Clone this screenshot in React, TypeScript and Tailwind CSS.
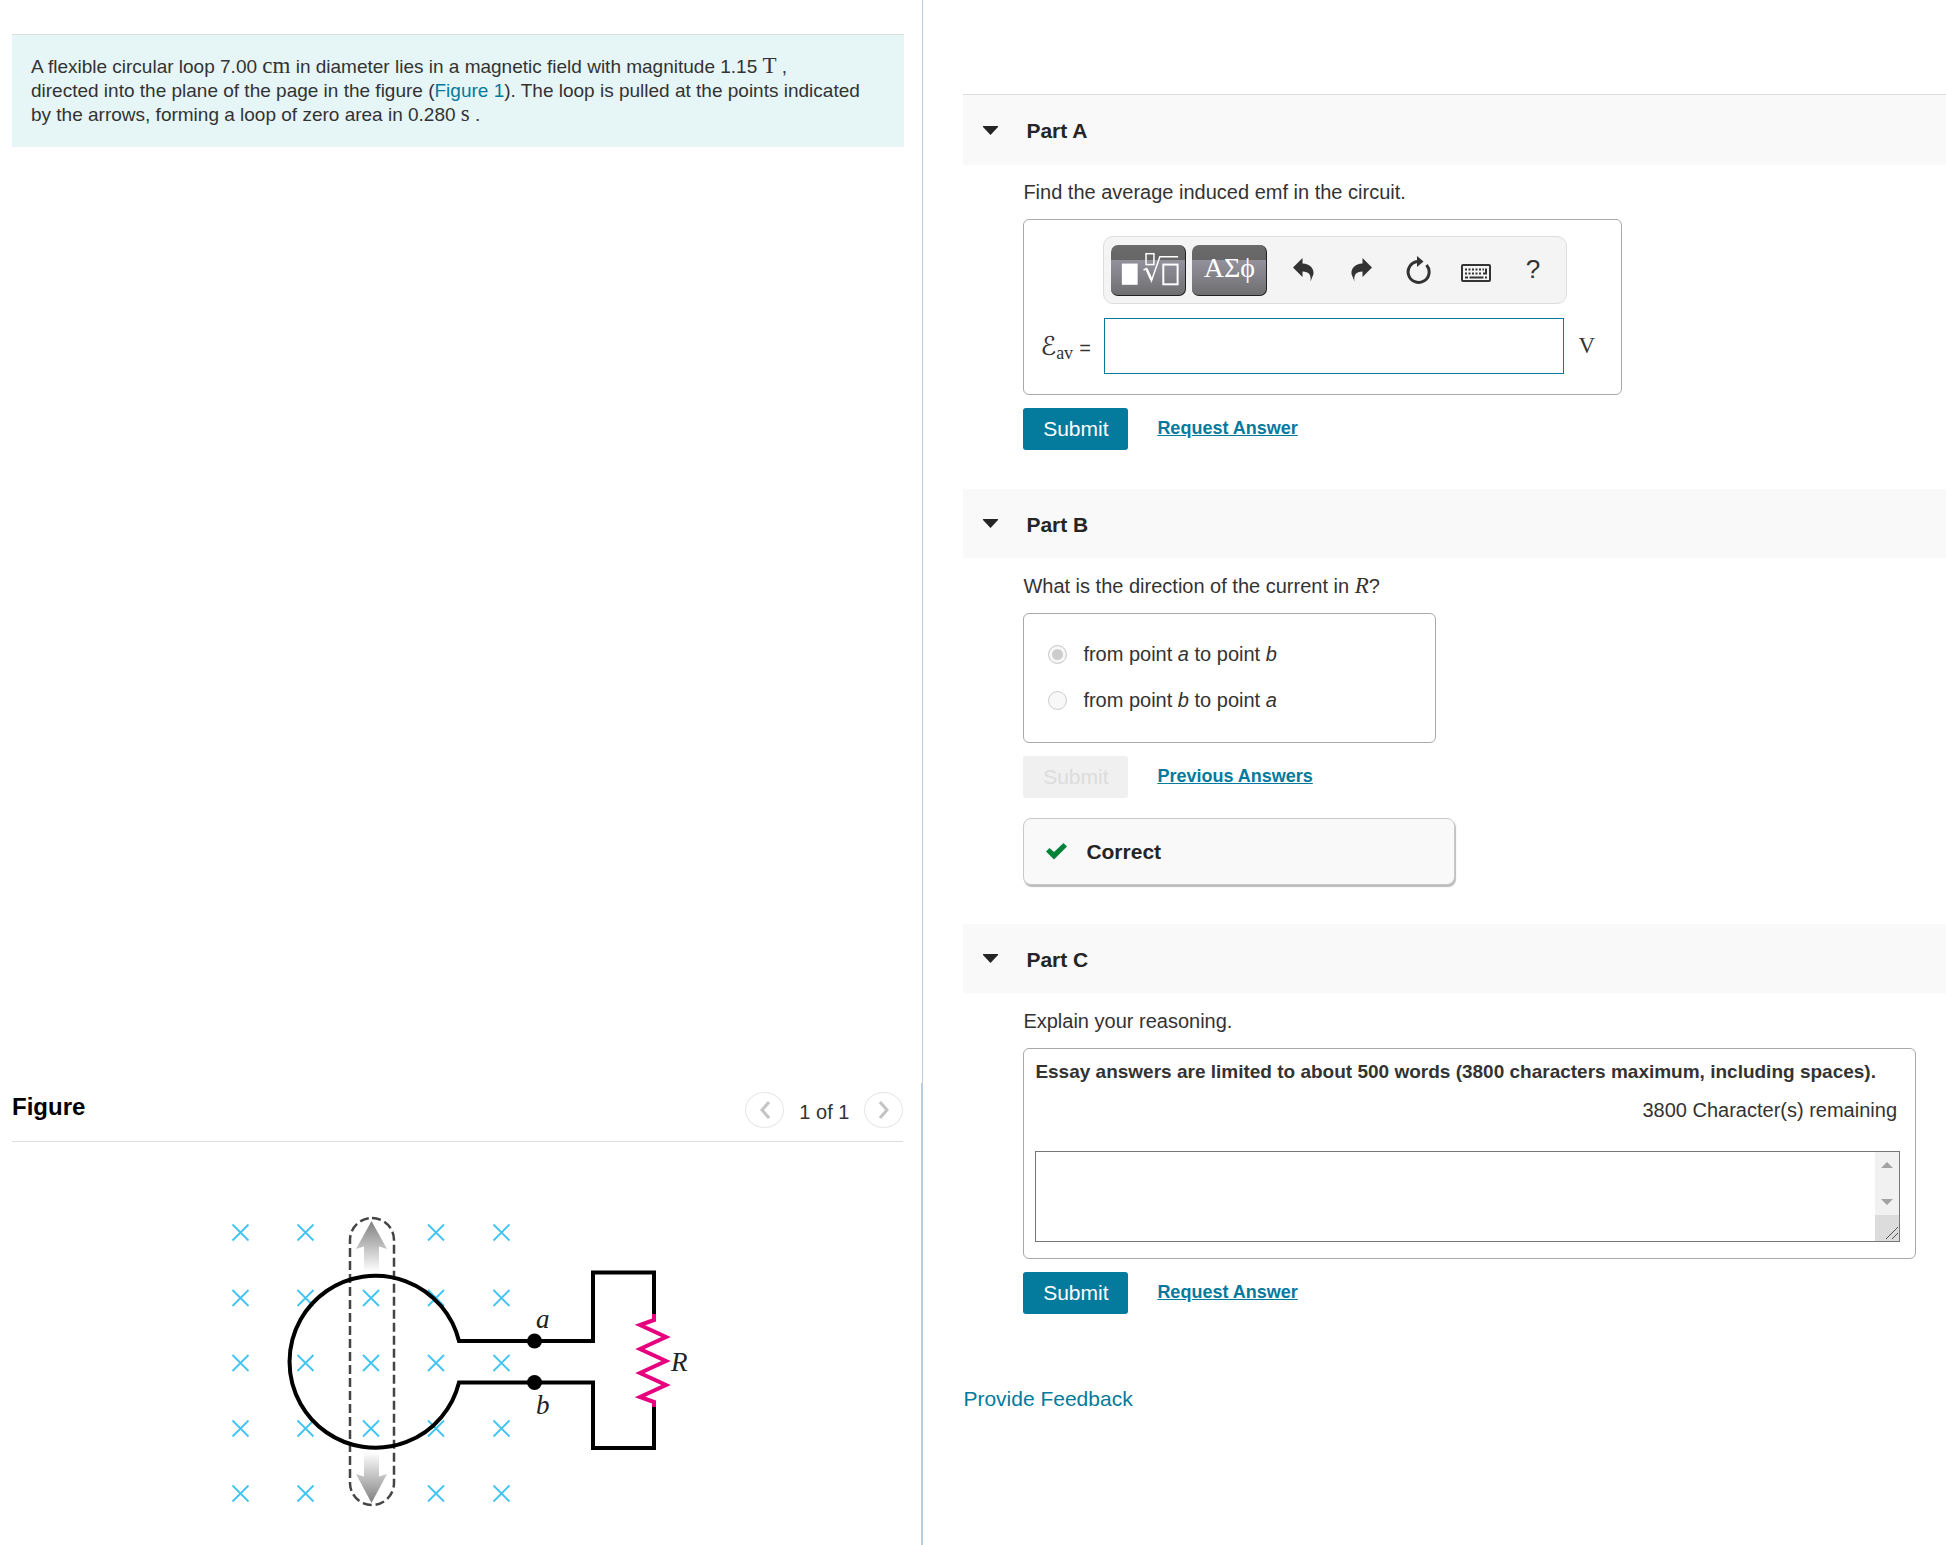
import React, { ReactNode } from 'react';
import { clsx } from 'clsx';

const MATH = "font-['Liberation_Serif',serif]";

function Unit({ children }: { children: ReactNode }) {
  return <span className={clsx(MATH, 'text-[23px] leading-4')}>{children}</span>;
}

function Panel({ className, children }: { className?: string; children: ReactNode }) {
  return (
    <div className={clsx('rounded-[6px] border border-[#a9a9a9] bg-white', className)}>{children}</div>
  );
}

interface PartProps {
  title: string;
  question: ReactNode;
  first?: boolean;
  children: ReactNode;
}

function Part({ title, question, first = false, children }: PartProps) {
  return (
    <section>
      <h2
        className={clsx(
          'flex items-center bg-[#f9f9f9] pt-0.5 text-[21px] font-bold text-[#252525]',
          first ? 'h-[71px] border-t border-[#ddd]' : 'h-[69px]'
        )}
      >
        <button type="button" className="flex items-center gap-7 pl-5">
          <svg width="15" height="9" viewBox="0 0 15 9" className="mb-0.5" aria-hidden="true">
            <path d="M0 0h15v1L7.5 9 0 1z" fill="#252525" />
          </svg>
          {title}
        </button>
      </h2>
      <div className={clsx('ml-[60px]', first ? 'pt-[15px]' : 'pt-4')}>
        <p className="mb-[15px] leading-6">{question}</p>
        {children}
      </div>
    </section>
  );
}

interface ActionsProps {
  link: string;
  disabled?: boolean;
}

function Actions({ link, disabled = false }: ActionsProps) {
  return (
    <div className="mt-[13px] flex items-center gap-[29px]">
      <button
        type="button"
        disabled={disabled}
        className={clsx(
          'h-[42px] w-[105px] rounded-[3px] text-[21px]',
          disabled ? 'bg-[#f0f0f0] text-[#dcdcdc]' : 'bg-[#047a9c] text-white'
        )}
      >
        Submit
      </button>
      <a href="#" className="mb-0.5 text-[18px] font-bold text-[#047a9c] underline">
        {link}
      </a>
    </div>
  );
}

const darkButton =
  'flex h-[51px] w-[75px] items-center justify-center rounded-[7px] border-r border-b border-[#222] bg-[linear-gradient(#6b6b6b_0,#666_29%,#93919c_30%,#6f6f71_100%)] text-white';

function Toolbar() {
  return (
    <div className="flex h-[68px] items-center rounded-[10px] border border-[#ddd] bg-[#f4f4f4] pl-[7px]">
      <button type="button" aria-label="Templates" className={darkButton}>
        <svg width="75" height="51" viewBox="0 0 75 51" fill="none" stroke="#fff" strokeWidth="1.5">
          <rect x="11" y="19.5" width="16" height="21.5" fill="#fff" stroke="none" />
          <rect x="35.5" y="9.5" width="8" height="11" />
          <path d="M33 26l3-1.5 5 12.5L49.5 12.5H68" />
          <path d="M36 25l5 11" strokeWidth="2.5" />
          <rect x="53" y="20.5" width="14.5" height="20" strokeWidth="2" />
        </svg>
      </button>
      <button type="button" aria-label="Symbols" className={clsx(darkButton, MATH, 'ml-1.5 pb-1 text-[28px]')}>
        ΑΣϕ
      </button>
      <div className="ml-2 flex items-center">
        <button type="button" aria-label="Undo" className="flex w-[57px] justify-center">
          <svg width="22" height="26" viewBox="0 0 22 26" fill="#333">
            <path d="M0 10.5L9.5 1v5.5C17 7 21 11 20.5 17L17.5 24.5C18.5 18 16 14.5 9.5 14.5V20z" />
          </svg>
        </button>
        <button type="button" aria-label="Redo" className="flex w-[57px] justify-center">
          <svg width="22" height="26" viewBox="0 0 22 26" fill="#333">
            <path d="M22 10.5L12.5 1v5.5C5 7 1 11 1.5 17L4.5 24.5C3.5 18 6 14.5 12.5 14.5V20z" />
          </svg>
        </button>
        <button type="button" aria-label="Reset" className="flex w-[58px] justify-center">
          <svg width="26" height="28" viewBox="0 0 26 28" fill="none">
            <path d="M21.5 9A10.5 10.5 0 1 1 12.5 5.5" stroke="#333" strokeWidth="3" />
            <path d="M12 0l6.5 5.5L12 11z" fill="#333" />
          </svg>
        </button>
        <button type="button" aria-label="Keyboard" className="flex w-[57px] justify-center pt-1.5">
          <svg width="30" height="18" viewBox="0 0 30 18" fill="none" stroke="#333" strokeWidth="2">
            <rect x="1" y="1" width="28" height="16" rx="1" />
            <path d="M4 5.5h19M4 9.5h17" strokeDasharray="2 1.5" />
            <path d="M4 13.5h3M8.5 13.5h14M24 13.5h2M25 4.5v5h-3" />
          </svg>
        </button>
        <button type="button" aria-label="Help" className="w-[57px] pb-0.5 text-center text-[26px]">
          ?
        </button>
      </div>
    </div>
  );
}

const columns = [20.5, 85.5, 151, 216, 281.5];
const rows = [32.5, 98, 163, 228.5, 293.5];

// field into the page, with no crosses where the pull arrows are
const crosses = rows.flatMap((y, r) =>
  columns.filter((_, c) => c !== 2 || (r > 0 && r < 4)).map((x) => ({ x, y }))
);

function LoopFigure() {
  return (
    <svg width="480" height="320" viewBox="0 0 480 320" fill="none" role="img" aria-label="Loop and resistor">
      <defs>
        <linearGradient id="pull-up" x1="0" y1="0" x2="0" y2="1">
          <stop offset="0" stopColor="#808080" />
          <stop offset="1" stopColor="#fff" />
        </linearGradient>
        <linearGradient id="pull-down" x1="0" y1="1" x2="0" y2="0">
          <stop offset="0" stopColor="#808080" />
          <stop offset="1" stopColor="#fff" />
        </linearGradient>
      </defs>
      {crosses.map(({ x, y }) => (
        <path
          key={`${x}-${y}`}
          d={`M${x - 8} ${y - 8}l16 16m0-16l-16 16`}
          stroke="#3fc4f3"
          strokeWidth="1.8"
        />
      ))}
      <path d="M151.5 21L167 49l-8-2.5V72h-15V46.5l-8 2.5z" fill="url(#pull-up)" />
      <path d="M151.5 303L167 274l-8 2.5V252h-15v24.5l-8-2.5z" fill="url(#pull-down)" />
      <rect
        x="130"
        y="18"
        width="44"
        height="287"
        rx="22"
        stroke="#444"
        strokeWidth="2.5"
        strokeDasharray="9 4"
      />
      <path
        d="M434 115V72.5h-61V141H239A86 86 0 1 0 239 182.5h134V248h61v-42"
        stroke="#000"
        strokeWidth="4"
      />
      <path
        d="M434 114v6l-14 5 26 12-26 12 26 12-26 12 26 12-26 12 14 5v5"
        stroke="#e6007e"
        strokeWidth="4"
      />
      <circle cx="314.5" cy="141" r="7.5" fill="#000" />
      <circle cx="314.5" cy="182.5" r="7.5" fill="#000" />
      <g fill="#222" className="font-['Liberation_Serif',serif] text-[27px] italic">
        <text x="316" y="128">a</text>
        <text x="316" y="214">b</text>
        <text x="451" y="171">R</text>
      </g>
    </svg>
  );
}

const pager =
  'flex h-[36px] w-[39px] items-center justify-center rounded-[50%] border border-[#e6e6e6] text-[#c4c4c4]';

function Problem() {
  return (
    <main className="flex w-[47.45%] shrink-0 flex-col border-r border-[#b8cde0] pl-3">
      <div className="mt-[34px] mr-[18px] border-t border-[#ddd] bg-[#e6f5f6] py-5 pr-4 pl-[19px] text-[19px] leading-6">
        A flexible circular loop 7.00 <Unit>cm</Unit> in diameter lies in a magnetic field with
        magnitude 1.15 <Unit>T</Unit> ,
        <br />
        directed into the plane of the page in the figure (
        <a href="#figure" className="text-[#047a9c]">
          Figure 1
        </a>
        ). The loop is pulled at the points indicated
        <br />
        by the arrows, forming a loop of zero area in 0.280 <Unit>s</Unit> .
      </div>
      <section id="figure" className="mt-auto h-[462px] border-r border-[#b8cde0]">
        <header className="mr-[18px] flex h-[59px] items-start justify-between border-b border-[#ddd] pt-[9px]">
          <h2 className="pt-px text-[24px] leading-7 font-bold text-black">Figure</h2>
          <div className="flex items-center gap-[15px]">
            <button type="button" aria-label="Previous figure" className={pager}>
              <svg width="10" height="18" viewBox="0 0 10 18" fill="none" stroke="currentColor" strokeWidth="3">
                <path d="M9 1L2 9l7 8" />
              </svg>
            </button>
            <span className="pt-1">1 of 1</span>
            <button type="button" aria-label="Next figure" className={pager}>
              <svg width="10" height="18" viewBox="0 0 10 18" fill="none" stroke="currentColor" strokeWidth="3">
                <path d="M1 1l7 8-7 8" />
              </svg>
            </button>
          </div>
        </header>
        <div className="mt-[58px] ml-[208px]">
          <LoopFigure />
        </div>
      </section>
    </main>
  );
}

const radio =
  'size-[19px] appearance-none rounded-full border border-[#ccc] bg-[#f8f8f8] checked:shadow-[inset_0_0_0_3px_#f8f8f8] checked:bg-[#ccc]';

function Answers() {
  return (
    <aside className="min-w-0 flex-1 pt-[94px] pl-10">
      <Part first title="Part A" question="Find the average induced emf in the circuit.">
        <Panel className="flex h-[176px] w-[599px] flex-col pt-4">
          <div className="ml-[79px] w-[464px]">
            <Toolbar />
          </div>
          <div className="mt-[14px] flex items-center">
            <label htmlFor="emf" className="flex w-20 items-baseline pl-4">
              <span className="font-['DejaVu_Serif','DejaVu_Sans',serif] text-[26px] leading-8">ℰ</span>
              <sub className={clsx(MATH, 'text-[18px]')}>av</sub>
              <span className="ml-1.5">=</span>
            </label>
            <input id="emf" type="text" className="h-14 w-[460px] border border-[#047a9c]" />
            <span className={clsx(MATH, 'ml-[14px] text-[23px]')}>V</span>
          </div>
        </Panel>
        <Actions link="Request Answer" />
      </Part>

      <div className="h-[39px]" />
      <Part
        title="Part B"
        question={
          <>
            What is the direction of the current in{' '}
            <i className={clsx(MATH, 'text-[23px] leading-4')}>R</i>?
          </>
        }
      >
        <Panel className="flex h-[130px] w-[413px] flex-col gap-[22px] pt-[28px] pl-6">
          <label className="flex items-center gap-4 leading-6">
            <input type="radio" name="direction" defaultChecked disabled className={radio} />
            <span>
              from point <i>a</i> to point <i>b</i>
            </span>
          </label>
          <label className="flex items-center gap-4 leading-6">
            <input type="radio" name="direction" disabled className={radio} />
            <span>
              from point <i>b</i> to point <i>a</i>
            </span>
          </label>
        </Panel>
        <Actions link="Previous Answers" disabled />
        <div className="mt-5 flex h-[67px] w-[432px] items-center gap-[19px] rounded-[8px] border border-[#c8c8c8] bg-[#f9f9f9] pl-[22px] text-[21px] font-bold text-[#252525] shadow-[1px_2px_1px_#bbb]">
          <svg width="21" height="17" viewBox="0 0 21 17" aria-hidden="true">
            <path d="M0 8.5L3.5 5l4.5 4L17.5 0 21 3.5 8 16.5z" fill="#038238" />
          </svg>
          Correct
        </div>
      </Part>

      <div className="h-[39px]" />
      <Part title="Part C" question="Explain your reasoning.">
        <Panel className="mr-[30px] px-[11px] pt-[11px] pb-4">
          <p className="text-[19px] leading-6 font-bold">
            <label htmlFor="essay">
              Essay answers are limited to about 500 words (3800 characters maximum, including spaces).
            </label>
          </p>
          <p className="mt-[14px] pr-[7px] text-right leading-6">3800 Character(s) remaining</p>
          <div className="relative mt-[29px] mr-1">
            <textarea id="essay" className="block h-[91px] w-full resize-none border border-[#767676]" />
            <div className="absolute top-px right-px h-[89px] w-6 bg-[#f1f1f1]">
              <svg width="24" height="89" viewBox="0 0 24 89" fill="#a3a3a3" aria-hidden="true">
                <path d="M12 10l6 6H6zM12 53l-6-6h12z" />
                <path d="M0 63h24v26H0z" fill="#dcdcdc" />
                <path d="M11 87l12-12M17 87l6-6" stroke="#555" />
              </svg>
            </div>
          </div>
        </Panel>
        <Actions link="Request Answer" />
      </Part>

      <a href="#" className="mt-[73px] inline-block text-[21px] leading-6 text-[#047a9c]">
        Provide Feedback
      </a>
    </aside>
  );
}

export default function App() {
  return (
    <div className="flex min-h-screen bg-white font-['Liberation_Sans',Arial,sans-serif] text-[20px] text-[#333]">
      <Problem />
      <Answers />
    </div>
  );
}
